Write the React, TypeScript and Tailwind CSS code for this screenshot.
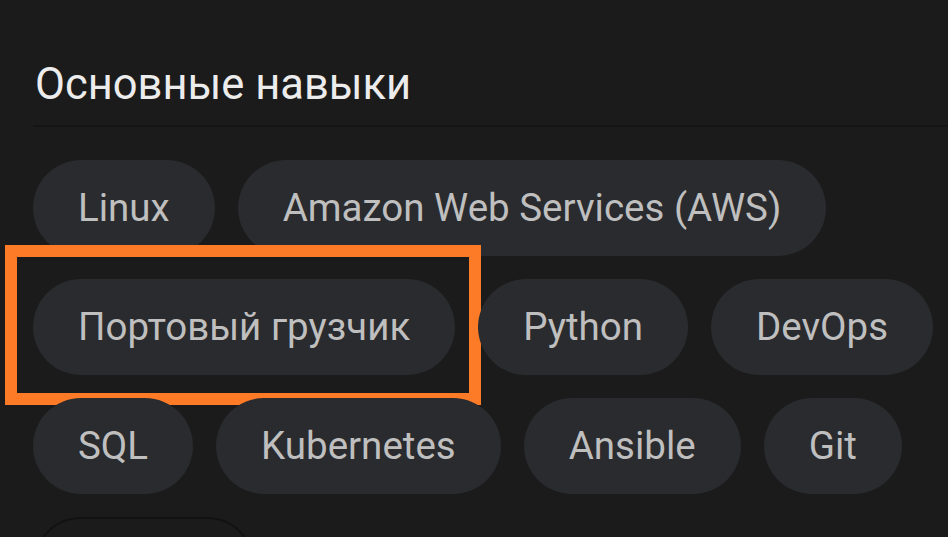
import React from 'react'

const rows: string[][] = [
  ['Linux', 'Amazon Web Services (AWS)'],
  ['Портовый грузчик', 'Python', 'DevOps'],
  ['SQL', 'Kubernetes', 'Ansible', 'Git'],
]

function Chip({ label, marked }: { label: string; marked?: boolean }) {
  return (
    <div className="relative">
      <div className="h-[96px] px-[45px] pt-[2px] rounded-full bg-[#2a2b2e] flex items-center text-[38.5px] leading-none text-[#bfbfbf] whitespace-nowrap">
        {label}
      </div>
      {/* highlight frame from the screenshot annotation */}
      {marked && (
        <span className="absolute -left-[28px] -right-[26px] -top-[34px] -bottom-[30px] border-[12px] border-[#fd7a26] pointer-events-none" />
      )}
    </div>
  )
}

export default function App() {
  return (
    <div
      className="w-[948px] h-[537px] overflow-hidden bg-[#1b1b1b]"
      style={{ fontFamily: 'Roboto, "Noto Sans", sans-serif' }}
    >
      <div className="pl-[33px] pt-[63px]">
        <h1 className="text-[43.5px] leading-none text-[#ececec] pl-[2px]">Основные навыки</h1>
        <div className="mt-[18px] h-[2px] bg-[#151515]" />
        <div className="mt-[33px] flex flex-col gap-[23px]">
          {rows.map((row, i) => (
            <div key={i} className="flex gap-[23px]">
              {row.map((label) => (
                <Chip key={label} label={label} marked={label === 'Портовый грузчик'} />
              ))}
            </div>
          ))}
          <div className="flex">
            <div className="h-[96px] w-[222px] rounded-full border-2 border-[#121212]" />
          </div>
        </div>
      </div>
    </div>
  )
}
